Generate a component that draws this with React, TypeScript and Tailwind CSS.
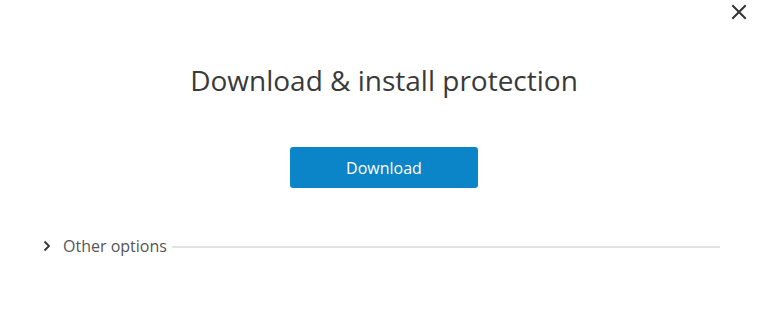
import React from "react";

export default function App() {
  return (
    <div
      className="w-[768px] h-[316px] bg-white relative overflow-hidden"
      style={{ fontFamily: '"Open Sans", "Noto Sans", sans-serif' }}
    >
      <button className="absolute right-[21px] top-[4px] w-[16px] h-[16px] flex items-center justify-center">
        <svg width="16" height="16" viewBox="0 0 16 16">
          <path d="M2 2 L14 14 M14 2 L2 14" stroke="#333" strokeWidth="2" strokeLinecap="square" />
        </svg>
      </button>
      <div className="flex flex-col items-center pt-[60px]">
        <h1 className="text-[28px] leading-[40px] text-[#3a3a3a] font-normal tracking-[0px]">
          Download &amp; install protection
        </h1>
        <button className="mt-[47px] w-[188px] h-[41px] rounded-[3px] bg-[#0b84c8] text-white text-[16px] flex items-center justify-center">
          Download
        </button>
      </div>
      <div className="flex items-center mt-[48px] pl-[43px] pr-[48px]">
        <svg width="8" height="12" viewBox="0 0 8 12" className="mr-[12px]">
          <path d="M1.5 1.5 L6 6 L1.5 10.5" stroke="#333" strokeWidth="1.8" fill="none" />
        </svg>
        <span className="text-[16px] text-[#555] leading-[20px]">Other options</span>
        <div className="flex-1 h-[2px] bg-[#e3e3e3] ml-[5px] mt-[2px]" />
      </div>
    </div>
  );
}
